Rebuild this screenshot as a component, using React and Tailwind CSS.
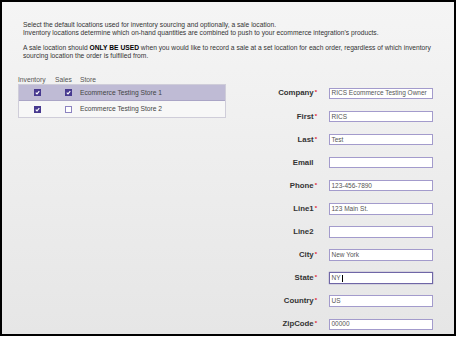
import React from 'react';

const stores = [
    { name: 'Ecommerce Testing Store 1', inventory: true, sales: true, selected: true },
    { name: 'Ecommerce Testing Store 2', inventory: true, sales: false, selected: false },
];

const fields = [
    { label: 'Company', value: 'RICS Ecommerce Testing Owner', required: true },
    { label: 'First', value: 'RICS', required: true },
    { label: 'Last', value: 'Test', required: true },
    { label: 'Email', value: '', required: false },
    { label: 'Phone', value: '123-456-7890', required: true },
    { label: 'Line1', value: '123 Main St.', required: true },
    { label: 'Line2', value: '', required: false },
    { label: 'City', value: 'New York', required: true },
    { label: 'State', value: 'NY', required: true, focused: true },
    { label: 'Country', value: 'US', required: true },
    { label: 'ZipCode', value: '00000', required: true },
];

const Check = ({ checked }) => (
    checked ? (
        <div className="w-[7px] h-[7px] bg-[#47398f] flex items-center justify-center">
            <svg width="5" height="5" viewBox="0 0 10 10">
                <path d="M1.5 5.2 L4 7.8 L8.6 2.2" fill="none" stroke="#fff" strokeWidth="2.2" />
            </svg>
        </div>
    ) : (
        <div className="w-[7px] h-[7px] bg-white border border-[#8c83c0]" />
    )
);

const App = () => {
    return (
        <div className="w-[456px] h-[336px] border-2 border-black bg-gradient-to-b from-[#f5f5f5] to-[#e6e6e6] font-['Liberation_Sans',sans-serif] text-[#333] overflow-hidden">
            <div className="pt-[19px] pl-[21px] text-[6.7px] leading-[8px]">
                <p>
                    Select the default locations used for inventory sourcing and optionally, a sale location.<br />
                    Inventory locations determine which on-hand quantities are combined to push to your ecommerce integration's products.
                </p>
                <p className="mt-[7px]">
                    A sale location should <b className="text-black">ONLY BE USED</b> when you would like to record a sale at a set location for each order, regardless of which inventory<br />
                    sourcing location the order is fulfilled from.
                </p>
            </div>

            <div className="flex mt-[15.6px]">
                {/* store table */}
                <div className="ml-[16px] w-[208px]">
                    <div className="flex h-[8.7px] items-center text-[6.7px] text-[#555]">
                        <span className="w-[37px]">Inventory</span>
                        <span className="w-[25px]">Sales</span>
                        <span>Store</span>
                    </div>
                    <div className="border border-[#cfcdd9]">
                        {stores.map((s, i) => (
                            <div
                                key={i}
                                className={`flex items-center h-[16px] text-[6.7px] text-[#444] ${s.selected ? 'bg-[#bfbbd5] border-b border-[#aaa5c6]' : 'bg-[#f7f7f7]'}`}
                            >
                                <div className="w-[30px] flex justify-end pr-[8px]"><Check checked={s.inventory} /></div>
                                <div className="w-[31px] flex justify-end pr-[8px]"><Check checked={s.sales} /></div>
                                <span>{s.name}</span>
                            </div>
                        ))}
                    </div>
                </div>

                {/* address form */}
                <div className="ml-[14px] pt-[12px] flex flex-col gap-[11.6px]">
                    {fields.map((f) => (
                        <div key={f.label} className="flex items-center h-[11.5px]">
                            <div className="w-[77px] text-right text-[7.8px] font-bold text-[#333] leading-none">
                                {f.label}
                                {f.required ? (
                                    <span className="text-[#e0202a] text-[6px] relative -top-[1px] ml-[1px]">*</span>
                                ) : (
                                    <span className="inline-block w-[3.5px]" />
                                )}
                            </div>
                            <div
                                className={`ml-[12px] w-[104px] h-[11.5px] bg-white border flex items-center pl-[1.5px] text-[6.5px] text-[#555] whitespace-nowrap overflow-hidden ${f.focused ? 'border-[#6f66a6] shadow-[0_0_1px_#6f66a6]' : 'border-[#a39bcc]'}`}
                            >
                                {f.value}
                                {f.focused && <span className="inline-block w-px h-[7px] bg-black ml-px" />}
                            </div>
                        </div>
                    ))}
                </div>
            </div>
        </div>
    );
};

export default App;
